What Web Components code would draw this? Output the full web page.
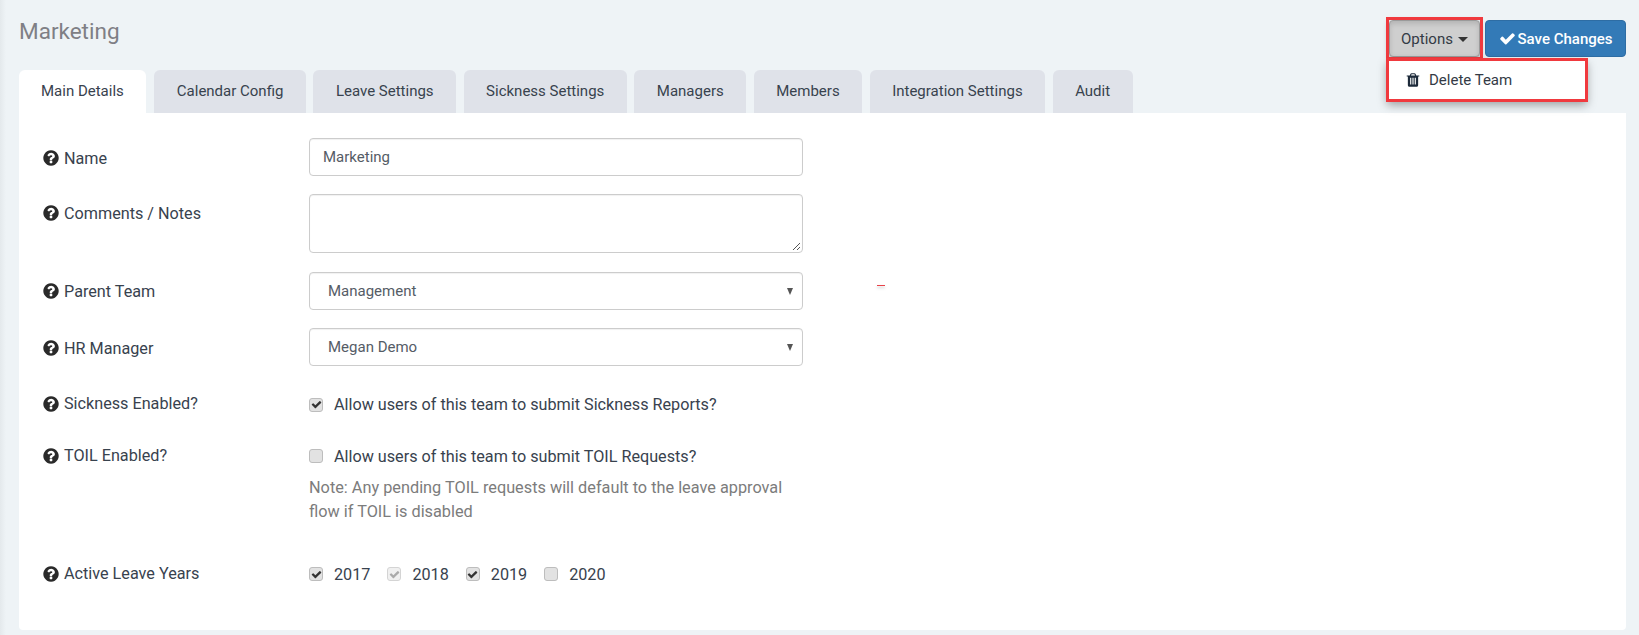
<!DOCTYPE html>
<html>
<head>
<meta charset="utf-8">
<title>Marketing</title>
<style>
  html, body { margin: 0; height: 100%; }
  body { background: #eef3f6; font-family: Roboto, "Liberation Sans", sans-serif; overflow: hidden; }
</style>
</head>
<body>
<x-page>
  <x-header title="Marketing"></x-header>
  <x-tabs>
    <x-tab active>Main Details</x-tab>
    <x-tab>Calendar Config</x-tab>
    <x-tab>Leave Settings</x-tab>
    <x-tab>Sickness Settings</x-tab>
    <x-tab>Managers</x-tab>
    <x-tab>Members</x-tab>
    <x-tab>Integration Settings</x-tab>
    <x-tab>Audit</x-tab>
  </x-tabs>
  <x-panel>
    <x-row label="Name" gap="18"><x-field value="Marketing"></x-field></x-row>
    <x-row label="Comments / Notes" gap="19" offset="10"><x-field multiline></x-field></x-row>
    <x-row label="Parent Team" gap="18" offset="10"><x-picker value="Management"></x-picker></x-row>
    <x-row label="HR Manager" gap="29"><x-picker value="Megan Demo"></x-picker></x-row>
    <x-row label="Sickness Enabled?" gap="33" offset="-0.5">
      <x-check checked>Allow users of this team to submit Sickness Reports?</x-check>
    </x-row>
    <x-row label="TOIL Enabled?" gap="41" offset="-0.5">
      <x-check>Allow users of this team to submit TOIL Requests?</x-check>
      <x-note>Note: Any pending TOIL requests will default to the leave approval flow if TOIL is disabled</x-note>
    </x-row>
    <x-row label="Active Leave Years" gap="0" offset="-0.5">
      <x-years>
        <x-check checked>2017</x-check>
        <x-check checked disabled>2018</x-check>
        <x-check checked>2019</x-check>
        <x-check>2020</x-check>
      </x-years>
    </x-row>
    <x-tick></x-tick>
  </x-panel>
</x-page>

<script>
const ICONS = {
  help: 'M1024 1376v-192q0-14-9-23t-23-9h-192q-14 0-23 9t-9 23v192q0 14 9 23t23 9h192q14 0 23-9t9-23zm256-672q0-88-55.5-163t-138.5-116-170-41q-243 0-371 213-15 24 8 42l132 100q7 6 19 6 16 0 25-12 53-68 86-92 34-24 86-24 48 0 85.5 26t37.5 59q0 38-20 61t-68 45q-63 28-115.5 86.5t-52.5 125.5v36q0 14 9 23t23 9h192q14 0 23-9t9-23q0-19 21.5-49.5t54.5-49.5q32-18 49-28.5t46-35 44.5-48 28-60.5 12.5-81zm384 192q0 209-103 385.5t-279.5 279.5-385.5 103-385.5-103-279.5-279.5-103-385.5 103-385.5 279.5-279.5 385.5-103 385.5 103 279.5 279.5 103 385.5z',
  check: 'M1671 566q0 40-28 68l-724 724-136 136q-28 28-68 28t-68-28l-136-136-362-362q-28-28-28-68t28-68l136-136q28-28 68-28t68 28l294 295 656-657q28-28 68-28t68 28l136 136q28 28 28 68z',
  trash: 'M704 1376v-704q0-14-9-23t-23-9h-64q-14 0-23 9t-9 23v704q0 14 9 23t23 9h64q14 0 23-9t9-23zm256 0v-704q0-14-9-23t-23-9h-64q-14 0-23 9t-9 23v704q0 14 9 23t23 9h64q14 0 23-9t9-23zm256 0v-704q0-14-9-23t-23-9h-64q-14 0-23 9t-9 23v704q0 14 9 23t23 9h64q14 0 23-9t9-23zm-544-992h448l-48-117q-7-9-17-11h-317q-10 2-17 11zm928 32v64q0 14-9 23t-23 9h-96v948q0 83-47 143.5t-113 60.5h-832q-66 0-113-58.5t-47-141.5v-952h-96q-14 0-23-9t-9-23v-64q0-14 9-23t23-9h309l70-167q15-37 54-63t79-26h320q40 0 79 26t54 63l70 167h309q14 0 23 9t9 23z'
};

function icon( name, size, color ) {
  return `<svg width="${size}" height="${size}" viewBox="0 0 1792 1792" style="display:block;flex:none"><path fill="${color}" d="${ICONS[name]}"/></svg>`;
}

// Small helper, every element is just a template in an open root
function define( tag, css, html, setup ) {
  customElements.define( tag, class extends HTMLElement {
    constructor() {
      super();
      this.attachShadow( {mode: 'open'} );
    }

    connectedCallback() {
      this.shadowRoot.innerHTML = `<style>${css}</style>${typeof html === 'function' ? html( this ) : html}`;
      if( setup ) setup( this );
    }
  } );
}

define( 'x-page', `
  :host { display: flex; flex-direction: column; height: 635px; box-sizing: border-box; padding: 0 13px 5px 19px; position: relative; }
  :host::before { content: ''; position: absolute; left: 0; top: 0; bottom: 0; width: 6px; background: linear-gradient( to right, #e4e9ec, #eef3f6 ); }
`, `<slot></slot>` );

define( 'x-header', `
  :host { display: flex; justify-content: space-between; align-items: flex-start; height: 70px; flex: none; }
  h1 { margin: 16px 0 0; font-size: 22.5px; line-height: 30px; font-weight: 400; color: #7f7f85; }
  .actions { display: flex; gap: 5px; margin-top: 20px; position: relative; }
  button { box-sizing: border-box; height: 37px; border-radius: 4px; font: 400 15px Roboto, sans-serif; display: flex; align-items: center; padding: 0; position: relative; }
  .options { width: 91px; justify-content: center; gap: 5px; background: #cfcfcf; border: 1px solid #9a9a9a; color: #333a45; box-shadow: inset 0 3px 5px rgba( 0, 0, 0, .125 ), 0 2px 6px rgba( 0, 0, 0, .35 ); }
  .options::after { content: ''; position: absolute; inset: -4px; border: 3px solid #f0393e; }
  .caret { width: 0; height: 0; border: 5px solid transparent; border-top-color: #333; border-bottom: 0; margin-top: 2px; }
  .save { width: 141px; justify-content: center; gap: 2px; background: #337ab7; border: 1px solid #2e6da4; color: #fff; font-weight: 500; padding-right: 2px; }
  .save svg { margin-left: 2px; }
  .menu { position: absolute; z-index: 5; left: 0; top: 41px; width: 196px; height: 38px; box-sizing: border-box; background: #fff; outline: 3px solid #f0393e; box-shadow: 0 4px 9px 2px rgba( 0, 0, 0, .35 ); display: flex; align-items: center; gap: 8px; padding-left: 16px; color: #333a45; font-size: 15px; }
`, ( el ) => `
  <h1>${el.getAttribute( 'title' )}</h1>
  <div class="actions">
    <button class="options">Options <span class="caret"></span></button>
    <button class="save">${icon( 'check', 17, '#fff' )}Save Changes</button>
    <div class="menu">${icon( 'trash', 16, '#1d2a3a' )}<span>Delete Team</span></div>
  </div>
` );

define( 'x-tabs', `
  :host { display: flex; gap: 7.5px; height: 43px; flex: none; }
`, `<slot></slot>` );

define( 'x-tab', `
  :host { display: block; box-sizing: border-box; padding: 0 22.5px; line-height: 43px; font-size: 15px; color: #38424e; background: #dfe2e9; border-radius: 6px 6px 0 0; white-space: nowrap; }
  :host( [active] ) { background: #fff; padding: 0 22px; margin-right: 1px; }
`, `<slot></slot>` );

define( 'x-panel', `
  :host { display: block; flex: 1; background: #fff; padding: 25px 0 0 24px; position: relative; border-radius: 0 0 4px 4px; }
`, `<slot></slot>` );

define( 'x-row', `
  :host { display: grid; grid-template-columns: 266px 494px; font-size: 16.2px; color: #38424e; }
  .label { display: flex; align-items: center; gap: 4px; height: 18px; }
  .label svg { margin-left: -1px; }
  .control { min-width: 0; }
`, ( el ) => `
  <div class="label" style="margin-top:${el.getAttribute( 'offset' ) || 11}px">${icon( 'help', 18, '#2a2a2a' )}<span>${el.getAttribute( 'label' )}</span></div>
  <div class="control"><slot></slot></div>
`, ( el ) => { el.style.marginBottom = el.getAttribute( 'gap' ) + 'px'; } );

define( 'x-field', `
  :host { display: block; box-sizing: border-box; height: 38px; border: 1px solid #ccc; border-radius: 4px; padding: 0 13px; line-height: 36px; font-size: 15px; color: #555c66; background: #fff; position: relative; box-shadow: inset 0 1px 1px rgba( 0, 0, 0, .06 ); }
  :host( [multiline] ) { height: 59px; }
  svg { position: absolute; right: 1px; bottom: 1px; }
`, ( el ) => el.hasAttribute( 'multiline' )
  ? `<svg width="10" height="10" viewBox="0 0 10 10"><path d="M9 2 2 9M9 6 6 9" stroke="#555" stroke-width="1" fill="none"/></svg>`
  : el.getAttribute( 'value' ) );

define( 'x-picker', `
  :host { display: flex; align-items: center; justify-content: space-between; box-sizing: border-box; height: 38px; border: 1px solid #ccc; border-radius: 4px; padding: 0 9px 0 18px; font-size: 15px; color: #555c66; background: #fff; box-shadow: inset 0 1px 1px rgba( 0, 0, 0, .06 ); }
  i { width: 0; height: 0; border-left: 3.5px solid transparent; border-right: 3.5px solid transparent; border-top: 7px solid #555; }
`, ( el ) => `<span>${el.getAttribute( 'value' )}</span><i></i>` );

define( 'x-check', `
  :host { display: inline-flex; align-items: center; gap: 11px; height: 18px; font-size: 16.2px; color: #38424e; }
  .box { box-sizing: border-box; width: 14px; height: 14px; border: 1px solid #bdbdbd; border-radius: 3px; background: #e2e2e2; display: flex; align-items: center; justify-content: center; flex: none; }
  :host( [disabled] ) .box { background: #f0f0f0; border-color: #d4d4d4; }
`, ( el ) => `
  <span class="box">${el.hasAttribute( 'checked' ) ? icon( 'check', 11, el.hasAttribute( 'disabled' ) ? '#aaa' : '#333' ) : ''}</span>
  <slot></slot>
` );

define( 'x-note', `
  :host { display: block; margin-top: 9px; width: 480px; font-size: 16.3px; line-height: 24px; color: #7c7c7c; }
`, `<slot></slot>` );

define( 'x-years', `
  :host { display: flex; gap: 17px; }
`, `<slot></slot>` );

// Stray red mark that sits on the panel in the original
define( 'x-tick', `
  :host { position: absolute; left: 858px; top: 172px; width: 8px; height: 1px; background: #e8434a; box-shadow: 0 2px 3px rgba( 0, 0, 0, .25 ); }
`, `` );
</script>
</body>
</html>
